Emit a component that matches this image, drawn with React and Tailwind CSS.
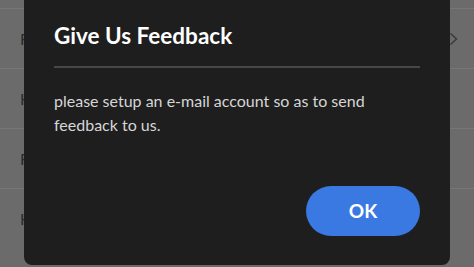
const rows = ['F', 'H', 'F', 'H']

export default function App() {
  return (
    <div className="relative w-[474px] h-[267px] overflow-hidden bg-[#6b6b6b] font-['Lato',sans-serif]">
      {/* list behind the dialog */}
      <div className="flex flex-col">
        <div className="h-[8px]" />
        {rows.map((r, i) => (
          <div key={i} className="h-[60px] border-t border-[#777] flex items-center justify-between pl-[20px] pr-[16px] text-[#2a2a2a] text-[16px]">
            <span>{r}</span>
            {i === 0 && (
              <svg width="9" height="14" viewBox="0 0 9 14" fill="none" stroke="#3a3a3a" strokeWidth="1.5">
                <path d="M1.5 1.5l6 5.5-6 5.5" />
              </svg>
            )}
          </div>
        ))}
      </div>

      {/* dialog */}
      <div className="absolute left-[24px] top-[-20px] w-[426px] h-[285px] bg-[#1e1e1e] rounded-b-[8px] pl-[30px] pr-[30px] pt-[43px] flex flex-col">
        <h2 className="text-white font-bold text-[22.5px] leading-[26px]">Give Us Feedback</h2>
        <div className="mt-[17px] h-[2px] bg-[#474747]" />
        <p className="mt-[21px] text-[#d6d6d6] text-[16px] leading-[24px]">
          please setup an e-mail account so as to send feedback to us.
        </p>
        <div className="flex-1" />
        <div className="flex justify-end mb-[29px]">
          <button className="w-[114px] h-[50px] rounded-full bg-[#3a79e2] text-white font-bold text-[19px]">OK</button>
        </div>
      </div>
    </div>
  )
}
